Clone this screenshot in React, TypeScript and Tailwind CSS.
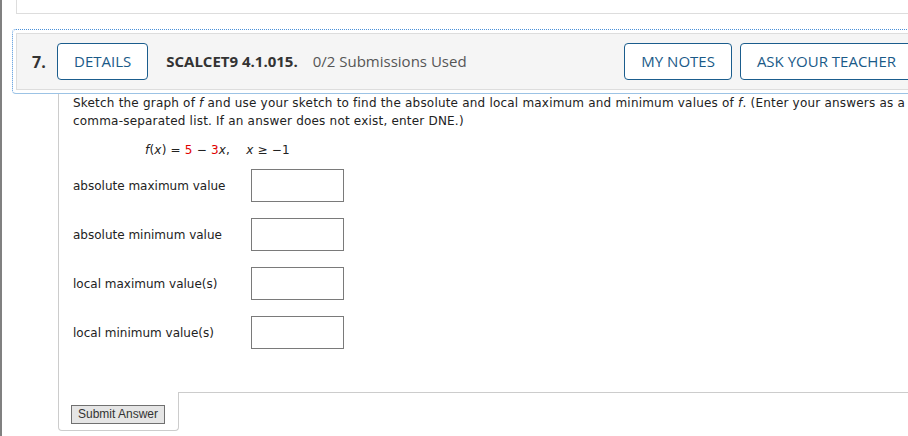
import React from 'react';

const fields = [
  'absolute maximum value',
  'absolute minimum value',
  'local maximum value(s)',
  'local minimum value(s)',
];

function HeaderButton({ label }: { label: string }) {
  return (
    <button
      type="button"
      className="h-[37px] px-[16px] rounded-[4px] border border-[#1b5d8d] bg-white text-[#1a5a88] text-[15px] leading-none uppercase whitespace-nowrap"
    >
      {label}
    </button>
  );
}

export default function App() {
  return (
    <div className="w-[908px] h-[436px] overflow-hidden bg-white">
      <div className="w-[930px] h-[436px] border-l-2 border-[#808080] pl-[10px] text-[#333]">
        {/* previous question, cut off at top */}
        <div className="ml-[4px] h-[14px] border-l border-b border-[#dddddd]" />

        {/* focused question header */}
        <div className="mt-[15px] p-[3px] rounded-[4px] border border-dotted border-[#4a90d9] [border-bottom-style:solid] border-b-[#9cc3e5]">
          <div
            className="h-[57px] flex items-center bg-[#f5f5f5] border border-[#dddddd] pl-[15px] pr-[12px]"
            style={{ fontFamily: '"Open Sans", sans-serif' }}
          >
            <span className="text-[16px] font-bold text-[#333] w-[26px]">7.</span>
            <div className="-ml-[1px]">
              <HeaderButton label="Details" />
            </div>
            <span className="ml-[18px] text-[15px] font-bold text-[#333]">SCALCET9 4.1.015.</span>
            <span className="ml-[15px] text-[15px] text-[#555]">0/2 Submissions Used</span>
            <div className="ml-auto flex gap-[8px]">
              <HeaderButton label="My Notes" />
              <HeaderButton label="Ask Your Teacher" />
            </div>
          </div>
        </div>

        {/* question body */}
        <div className="ml-[46px]" style={{ fontFamily: '"DejaVu Sans", Verdana, sans-serif' }}>
          <div className="border-l border-[#cccccc] pl-[14px] pb-[43px] text-[12px] leading-[18px] text-[#222]">
            <p className="w-[835px] tracking-[0.2px]">
              Sketch the graph of <i>f</i> and use your sketch to find the absolute and local maximum and minimum
              values of <i>f</i>. (Enter your answers as a comma-separated list. If an answer does not exist, enter
              DNE.)
            </p>
            <p className="mt-[11px] ml-[72px] whitespace-pre tracking-[0.2px]">
              <i>f</i>(<i>x</i>) = <span className="text-[#e00000]">5</span> − <span className="text-[#e00000]">3</span>
              <i>x</i>,    <i>x</i> ≥ −1
            </p>
            <div className="mt-[10px] flex flex-col gap-[16px]">
              {fields.map((f) => (
                <div key={f} className="flex items-center">
                  <span className="w-[178px]">{f}</span>
                  <input
                    type="text"
                    className="w-[93px] h-[33px] border border-[#7a7a7a] bg-white outline-none"
                  />
                </div>
              ))}
            </div>
          </div>

          {/* submit tab */}
          <div className="flex">
            <div className="w-[121px] h-[39px] border-l border-r border-b border-[#cccccc] rounded-b-[4px] pl-[12px] pt-[9px]">
              <button
                type="button"
                className="w-[94px] h-[19px] border border-[#707070] bg-[#e5e5e5] text-[12px] leading-none text-[#333]"
                style={{ fontFamily: '"Liberation Sans", Arial, sans-serif' }}
              >
                Submit Answer
              </button>
            </div>
            <div className="flex-1 border-t border-[#cccccc]" />
          </div>
        </div>
      </div>
    </div>
  );
}
